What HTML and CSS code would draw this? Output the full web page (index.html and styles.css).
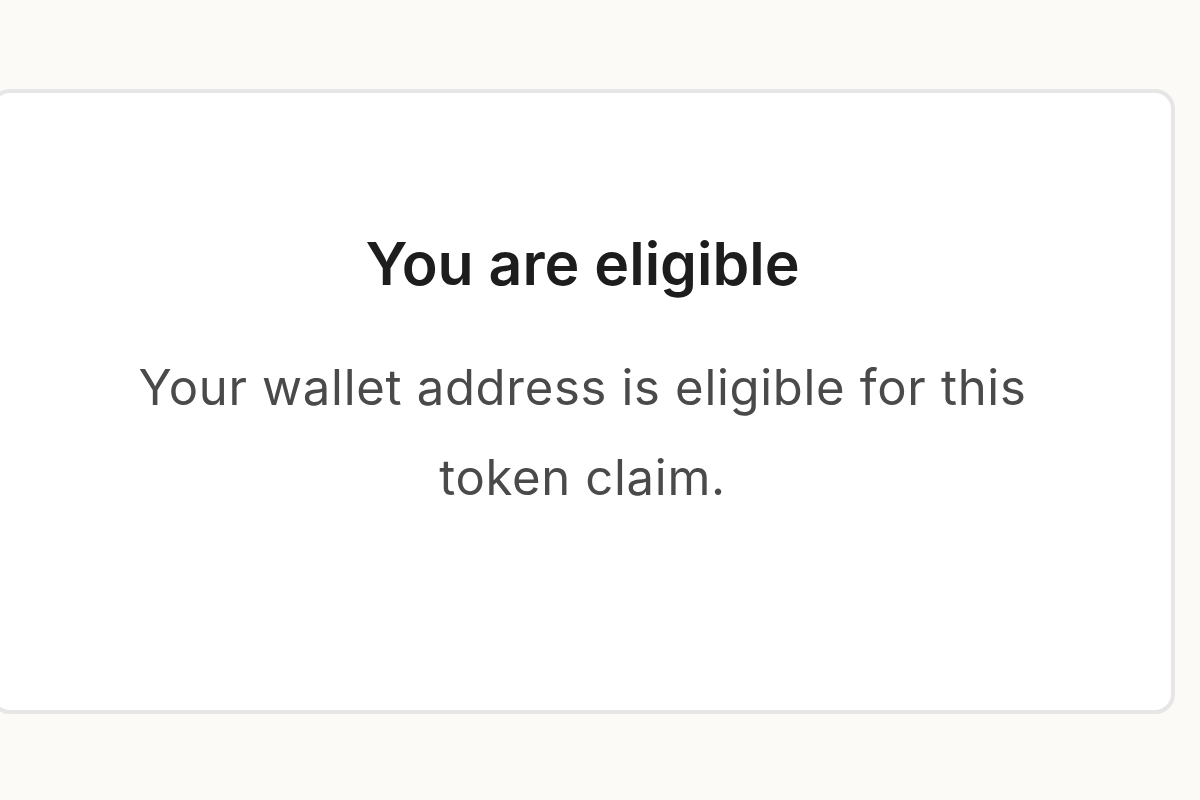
FILE: index.html
```html
<!DOCTYPE html>
<html lang="en">
<head>
<meta charset="utf-8">
<title>Eligibility</title>
<link rel="stylesheet" href="styles.css">
</head>
<body>
<main class="page">
  <section class="card">
    <h1 class="title">You are eligible</h1>
    <p class="message">Your wallet address is eligible for this token claim.</p>
  </section>
</main>
</body>
</html>
```

FILE: styles.css
```css
html, body {
  margin: 0;
  padding: 0;
  background: #fbfaf7;
  height: 100%;
  overflow: hidden;
}
body {
  font-family: Inter, "Noto Sans", sans-serif;
}
.page {
  padding-top: 89px;
}
.card {
  box-sizing: border-box;
  margin-left: -10px;
  width: 1185px;
  height: 625px;
  background: #ffffff;
  border: 4px solid #e6e6e6;
  border-radius: 20px;
  display: flex;
  flex-direction: column;
  align-items: center;
  padding-top: 126px;
}
.title {
  margin: 0;
  font-size: 59px;
  font-weight: 600;
  color: #1d1d1d;
  letter-spacing: 0;
  line-height: 90px;
}
.message {
  margin: 34px 0 0;
  max-width: 940px;
  text-align: center;
  font-size: 49px;
  font-weight: 400;
  color: #4a4a4a;
  letter-spacing: 0.7px;
  line-height: 90px;
}
```
